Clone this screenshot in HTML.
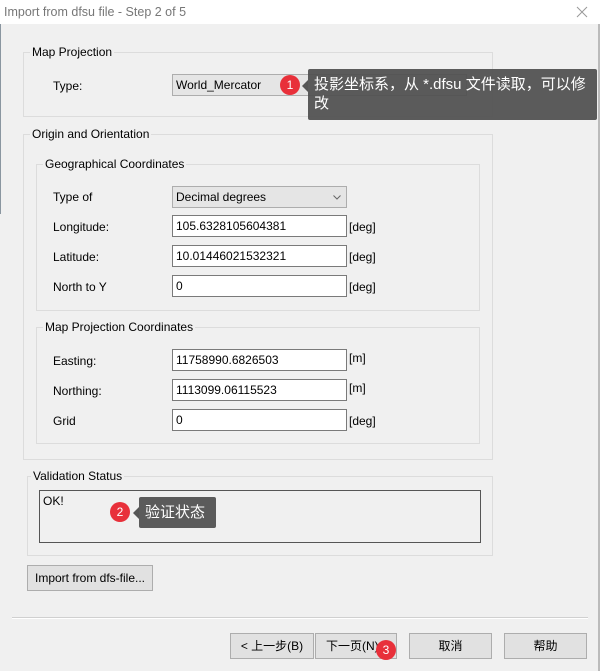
<!DOCTYPE html>
<html><head><meta charset="utf-8"><style>
*{margin:0;padding:0;box-sizing:border-box}
body{width:600px;height:671px;overflow:hidden;background:#f0f0f0;font-family:"Liberation Sans","Noto Sans CJK SC",sans-serif;font-size:12px;color:#000;position:relative}
.a{position:absolute}
.title{left:0;top:0;width:600px;height:24px;background:#fff;color:#777;font-size:12.5px;line-height:24px;padding-left:4px}
.grp{position:absolute;border:1px solid #dcdcdc}
.lbl{position:absolute;background:#f0f0f0;padding:0 2px;line-height:14px}
.in{position:absolute;background:#fff;border:1px solid #7a7a7a;height:22px;line-height:20px;padding-left:3px;width:175px;left:172px}
.cb{position:absolute;background:#e5e5e5;border:1px solid #adadad;height:22px;line-height:20px;padding-left:3px}
.btn{position:absolute;background:#e1e1e1;border:1px solid #adadad;text-align:center;line-height:24px;height:26px}
.badge{position:absolute;width:20px;height:20px;border-radius:50%;background:#e8303a;color:#fff;text-align:center;line-height:20px;font-size:12px}
.tip{position:absolute;background:rgba(80,80,80,.93);color:#fff;border-radius:2px}
</style></head><body>
<div class="a title">Import from dfsu file - Step 2 of 5</div>
<svg class="a" style="left:576px;top:6px" width="12" height="12"><path d="M1 1L11 11M11 1L1 11" stroke="#999" stroke-width="1"/></svg>
<div class="a" style="left:0;top:24px;width:1px;height:190px;background:#8a96a0"></div>
<div class="a" style="left:598px;top:24px;width:2px;height:647px;background:#bbb"></div>

<div class="grp" style="left:23px;top:52px;width:470px;height:65px"></div>
<div class="lbl" style="left:30px;top:45px">Map Projection</div>
<div class="a" style="left:53px;top:79px">Type:</div>
<div class="cb" style="left:172px;top:74px;width:295px">World_Mercator</div>

<div class="grp" style="left:23px;top:134px;width:470px;height:326px"></div>
<div class="lbl" style="left:30px;top:127px">Origin and Orientation</div>
<div class="grp" style="left:36px;top:164px;width:444px;height:147px"></div>
<div class="lbl" style="left:43px;top:157px">Geographical Coordinates</div>
<div class="a" style="left:53px;top:190px">Type of</div>
<div class="cb" style="left:172px;top:186px;width:175px">Decimal degrees<svg style="position:absolute;right:5px;top:8px" width="8" height="5"><path d="M0.5 0.5L4 4L7.5 0.5" stroke="#666" fill="none"/></svg></div>
<div class="a" style="left:53px;top:220px">Longitude:</div><div class="in" style="top:215px">105.6328105604381</div><div class="a" style="left:349px;top:220px">[deg]</div>
<div class="a" style="left:53px;top:250px">Latitude:</div><div class="in" style="top:245px">10.01446021532321</div><div class="a" style="left:349px;top:250px">[deg]</div>
<div class="a" style="left:53px;top:280px">North to Y</div><div class="in" style="top:275px">0</div><div class="a" style="left:349px;top:280px">[deg]</div>

<div class="grp" style="left:36px;top:327px;width:444px;height:117px"></div>
<div class="lbl" style="left:43px;top:320px">Map Projection Coordinates</div>
<div class="a" style="left:53px;top:354px">Easting:</div><div class="in" style="top:349px">11758990.6826503</div><div class="a" style="left:349px;top:351px">[m]</div>
<div class="a" style="left:53px;top:384px">Northing:</div><div class="in" style="top:379px">1113099.06115523</div><div class="a" style="left:349px;top:381px">[m]</div>
<div class="a" style="left:53px;top:414px">Grid</div><div class="in" style="top:409px">0</div><div class="a" style="left:349px;top:414px">[deg]</div>

<div class="grp" style="left:27px;top:476px;width:466px;height:80px"></div>
<div class="lbl" style="left:31px;top:469px">Validation Status</div>
<div class="a" style="left:39px;top:490px;width:442px;height:53px;border:1px solid #555;background:#f0f0f0;padding:3px 0 0 3px">OK!</div>

<div class="btn" style="left:27px;top:565px;width:126px">Import from dfs-file...</div>
<div class="a" style="left:12px;top:617px;width:576px;height:2px;background:#d0d0d0;border-bottom:1px solid #fff"></div>

<div class="btn" style="left:230px;top:633px;width:84px">&lt; 上一步(B)</div>
<div class="btn" style="left:315px;top:633px;width:82px;text-align:left;padding-left:10px">下一页(N)</div>
<div class="btn" style="left:409px;top:633px;width:83px">取消</div>
<div class="btn" style="left:504px;top:633px;width:83px">帮助</div>

<div class="tip" style="left:308px;top:69px;width:289px;height:51px;font-size:15px;line-height:19px;padding:6px 0 0 6px">投影坐标系，从 *.dfsu 文件读取，可以修改</div>
<div class="a" style="left:302px;top:80px;width:0;height:0;border:6px solid transparent;border-right-color:#555;border-left:0"></div>
<div class="badge" style="left:280px;top:75px">1</div>
<div class="tip" style="left:139px;top:497px;width:77px;height:31px;font-size:15px;line-height:31px;padding-left:6px">验证状态</div>
<div class="a" style="left:133px;top:507px;width:0;height:0;border:6px solid transparent;border-right-color:#555;border-left:0"></div>
<div class="badge" style="left:110px;top:502px">2</div>
<div class="badge" style="left:376px;top:640px">3</div>
</body></html>
